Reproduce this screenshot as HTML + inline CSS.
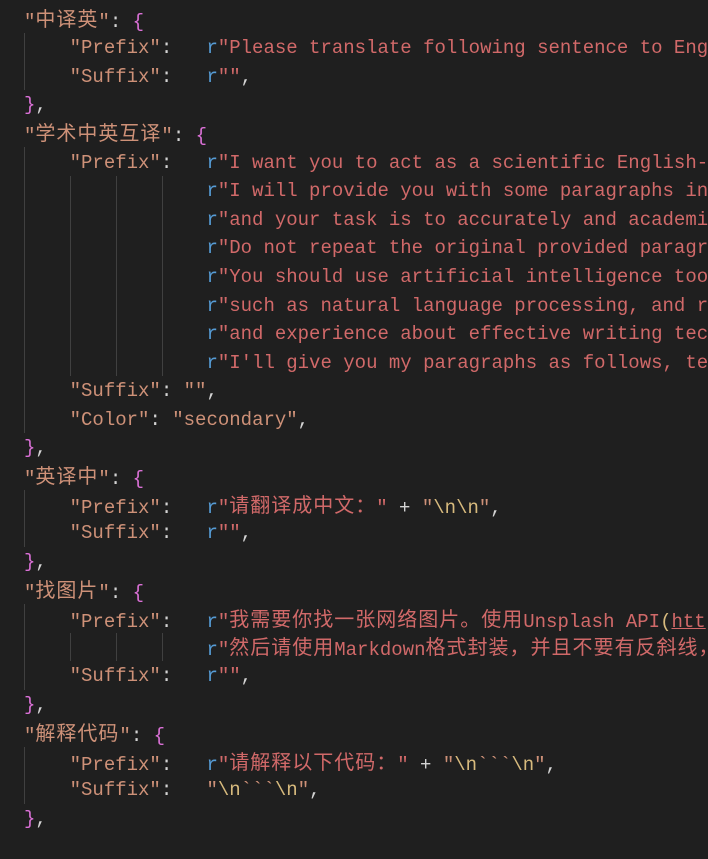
<!DOCTYPE html>
<html><head><meta charset="utf-8"><style>
html,body{margin:0;padding:0;background:#1f1f1f;width:708px;height:859px;overflow:hidden}
#w{position:absolute;left:0;top:0;width:708px;height:859px;overflow:hidden}
.l{position:absolute;left:24px;height:29px;line-height:29px;white-space:pre;font-family:"Liberation Mono","Noto Sans CJK SC",monospace;font-size:19px;color:#d4d4d4}
.c{letter-spacing:1px;font-size:20px;line-height:29px;font-family:"Noto Sans CJK SC",sans-serif;position:relative;top:-1px}
.k{color:#ce9178}.r{color:#569cd6}.s{color:#d16969}.b{color:#da70d6}.e{color:#d7ba7d}
.g{position:absolute;width:1px;background:#404040}
</style></head><body><div id="w">
<div class="g" style="left:24px;top:33px;height:57px"></div>
<div class="g" style="left:24px;top:147px;height:286px"></div>
<div class="g" style="left:70px;top:176px;height:200px"></div>
<div class="g" style="left:116px;top:176px;height:200px"></div>
<div class="g" style="left:162px;top:176px;height:200px"></div>
<div class="g" style="left:24px;top:490px;height:57px"></div>
<div class="g" style="left:24px;top:604px;height:86px"></div>
<div class="g" style="left:70px;top:633px;height:28px"></div>
<div class="g" style="left:116px;top:633px;height:28px"></div>
<div class="g" style="left:162px;top:633px;height:28px"></div>
<div class="g" style="left:24px;top:747px;height:57px"></div>

<div class="l" style="top:-23px"><span class="b">{</span></div>
<div class="l" style="top:4px"><span class="k">"<span class="c">中译英</span>"</span>: <span class="b">{</span></div>
<div class="l" style="top:34px">    <span class="k">"Prefix"</span>:   <span class="r">r</span><span class="s">"Please translate following sentence to Eng</span></div>
<div class="l" style="top:63px">    <span class="k">"Suffix"</span>:   <span class="r">r</span><span class="s">""</span>,</div>
<div class="l" style="top:91px"><span class="b">}</span>,</div>
<div class="l" style="top:118px"><span class="k">"<span class="c">学术中英互译</span>"</span>: <span class="b">{</span></div>
<div class="l" style="top:149px">    <span class="k">"Prefix"</span>:   <span class="r">r</span><span class="s">"I want you to act as a scientific English-</span></div>
<div class="l" style="top:177px">                <span class="r">r</span><span class="s">"I will provide you with some paragraphs in</span></div>
<div class="l" style="top:206px">                <span class="r">r</span><span class="s">"and your task is to accurately and academi</span></div>
<div class="l" style="top:234px">                <span class="r">r</span><span class="s">"Do not repeat the original provided paragr</span></div>
<div class="l" style="top:263px">                <span class="r">r</span><span class="s">"You should use artificial intelligence too</span></div>
<div class="l" style="top:292px">                <span class="r">r</span><span class="s">"such as natural language processing, and r</span></div>
<div class="l" style="top:320px">                <span class="r">r</span><span class="s">"and experience about effective writing tec</span></div>
<div class="l" style="top:349px">                <span class="r">r</span><span class="s">"I'll give you my paragraphs as follows, te</span></div>
<div class="l" style="top:377px">    <span class="k">"Suffix"</span>: <span class="k">""</span>,</div>
<div class="l" style="top:406px">    <span class="k">"Color"</span>: <span class="k">"secondary"</span>,</div>
<div class="l" style="top:434px"><span class="b">}</span>,</div>
<div class="l" style="top:461px"><span class="k">"<span class="c">英译中</span>"</span>: <span class="b">{</span></div>
<div class="l" style="top:490px">    <span class="k">"Prefix"</span>:   <span class="r">r</span><span class="s">"<span class="c">请翻译成中文：</span>"</span> + <span class="k">"<span class="e">\n\n</span>"</span>,</div>
<div class="l" style="top:519px">    <span class="k">"Suffix"</span>:   <span class="r">r</span><span class="s">""</span>,</div>
<div class="l" style="top:548px"><span class="b">}</span>,</div>
<div class="l" style="top:575px"><span class="k">"<span class="c">找图片</span>"</span>: <span class="b">{</span></div>
<div class="l" style="top:604px">    <span class="k">"Prefix"</span>:   <span class="r">r</span><span class="s">"<span class="c">我需要你找一张网络图片。使用</span>Unsplash API<span class="e">(</span><span style="text-decoration:underline">htt</span></span></div>
<div class="l" style="top:632px">                <span class="r">r</span><span class="s">"<span class="c">然后请使用</span>Markdown<span class="c">格式封装，并且不要有反斜线，</span></span></div>
<div class="l" style="top:662px">    <span class="k">"Suffix"</span>:   <span class="r">r</span><span class="s">""</span>,</div>
<div class="l" style="top:691px"><span class="b">}</span>,</div>
<div class="l" style="top:718px"><span class="k">"<span class="c">解释代码</span>"</span>: <span class="b">{</span></div>
<div class="l" style="top:747px">    <span class="k">"Prefix"</span>:   <span class="r">r</span><span class="s">"<span class="c">请解释以下代码：</span>"</span> + <span class="k">"<span class="e">\n</span>&#96;&#96;&#96;<span class="e">\n</span>"</span>,</div>
<div class="l" style="top:776px">    <span class="k">"Suffix"</span>:   <span class="k">"<span class="e">\n</span>&#96;&#96;&#96;<span class="e">\n</span>"</span>,</div>
<div class="l" style="top:805px"><span class="b">}</span>,</div>
</div></body></html>
